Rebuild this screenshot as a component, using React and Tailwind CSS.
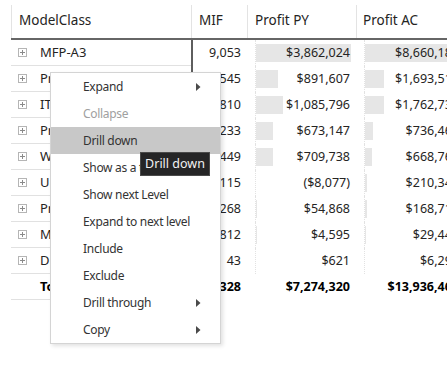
import React from 'react';

const rows = [
  { name: 'MFP-A3', mif: '9,053', py: 3862024, ac: 8660184 },
  { name: 'Production', mif: '1,545', py: 891607, ac: 1693514 },
  { name: 'IT Services', mif: '1,810', py: 1085796, ac: 1762735 },
  { name: 'Printers', mif: '2,233', py: 673147, ac: 736461 },
  { name: 'Wide Format', mif: '1,449', py: 709738, ac: 668763 },
  { name: 'Unknown', mif: '115', py: -8077, ac: 210347 },
  { name: 'Projectors', mif: '268', py: 54868, ac: 168719 },
  { name: 'MFP-A4', mif: '812', py: 4595, ac: 29449 },
  { name: 'Displays', mif: '43', py: 621, ac: 6292 },
];

const maxPy = 3862024;
const maxAc = 8660184;
const BAR = 95;

const fmt = (v) => {
  const s = '$' + Math.abs(v).toLocaleString('en-US');
  return v < 0 ? `(${s})` : s;
};

const menu = [
  { label: 'Expand', sub: true },
  { label: 'Collapse', disabled: true },
  { label: 'Drill down', active: true },
  { label: 'Show as a table' },
  { label: 'Show next Level' },
  { label: 'Expand to next level' },
  { label: 'Include' },
  { label: 'Exclude' },
  { label: 'Drill through', sub: true },
  { label: 'Copy', sub: true },
];

function PlusBox() {
  return (
    <span className="flex h-[9px] w-[9px] shrink-0 items-center justify-center border border-[#b5b5b5] bg-white">
      <svg width="7" height="7" viewBox="0 0 7 7">
        <path d="M3.5 1v5M1 3.5h5" stroke="#8a8a8a" strokeWidth="1" />
      </svg>
    </span>
  );
}

function BarCell({ value, max, bold }) {
  const w = value > 0 ? Math.max(0, (value / max) * BAR) : 0;
  return (
    <div className="relative flex h-full w-[109px] shrink-0 items-center justify-end pr-[6px]">
      {!bold && (
        <div className="absolute left-[8px] top-0 h-full border-l border-dotted border-[#e2e2e2]">
          <div className="mt-[4px] h-[18px] bg-[#e6e6e6]" style={{ width: w }} />
        </div>
      )}
      <span className={`relative whitespace-nowrap ${bold ? 'font-bold text-black' : ''}`}>{fmt(value)}</span>
    </div>
  );
}

function Arrow() {
  return (
    <svg width="5" height="8" viewBox="0 0 5 8" className="absolute left-[145px] top-[10px]">
      <path d="M0 0L4.5 4L0 8Z" fill="#4a4a4a" />
    </svg>
  );
}

export default function App() {
  return (
    <div
      className="relative h-[376px] w-[447px] overflow-hidden bg-white text-[12.5px] text-[#252423]"
      style={{ fontFamily: '"Segoe UI", "Noto Sans", sans-serif' }}
    >
      <div className="ml-[11px] w-[520px]">
        {/* header */}
        <div className="flex h-[40px] border-b-2 border-[#666666] pt-[5px] text-[13.5px]">
          <div className="w-[180px] shrink-0 border-l border-[#e3e3e3] pl-[7px] pt-[5px]">ModelClass</div>
          <div className="w-[56px] shrink-0 border-l border-[#e3e3e3] pl-[7px] pt-[5px]">MIF</div>
          <div className="w-[109px] shrink-0 border-l border-[#e3e3e3] pl-[7px] pt-[5px]">Profit PY</div>
          <div className="w-[109px] shrink-0 border-l border-[#e3e3e3] pl-[6px] pt-[5px]">Profit AC</div>
        </div>

        {rows.map((r) => (
          <div key={r.name} className="flex h-[26px]">
            <div className="flex w-[180px] shrink-0 items-center gap-[13px] border-b border-[#e1e1e1] pl-[7px]">
              <PlusBox />
              <span className="text-[13px]">{r.name}</span>
            </div>
            <div className="flex w-[56px] shrink-0 items-center justify-end border-l-2 border-[#5e5e5e] pr-[6px]">{r.mif}</div>
            <BarCell value={r.py} max={maxPy} />
            <BarCell value={r.ac} max={maxAc} />
          </div>
        ))}

        {/* total */}
        <div className="flex h-[26px] font-bold text-black">
          <div className="flex w-[180px] shrink-0 items-center border-b border-[#e1e1e1] pl-[29px] text-[13px]">Total</div>
          <div className="flex w-[56px] shrink-0 items-center justify-end border-l-2 border-[#5e5e5e] pr-[6px]">17,328</div>
          <BarCell value={7274320} max={maxPy} bold />
          <BarCell value={13936463} max={maxAc} bold />
        </div>
      </div>

      {/* context menu */}
      <div className="absolute left-[50px] top-[72px] w-[171px] border border-[#d4d4d4] bg-white shadow-[2px_2px_4px_rgba(0,0,0,0.12)]">
        {menu.map((m) => (
          <div
            key={m.label}
            className={`relative flex h-[27px] items-center pl-[32px] text-[12px] tracking-[-0.3px] ${m.active ? 'bg-[#c8c8c8]' : ''} ${m.disabled ? 'text-[#a0a0a0]' : 'text-[#333333]'}`}
          >
            <span className="whitespace-nowrap">{m.label}</span>
            {m.sub && <Arrow />}
          </div>
        ))}
      </div>

      {/* tooltip */}
      <div className="absolute left-[140px] top-[152px] flex h-[24px] w-[70px] items-center justify-center border border-[#4a4a4a] bg-[#252526] text-[12.5px] text-[#f2f2f2]">
        Drill down
      </div>
    </div>
  );
}
